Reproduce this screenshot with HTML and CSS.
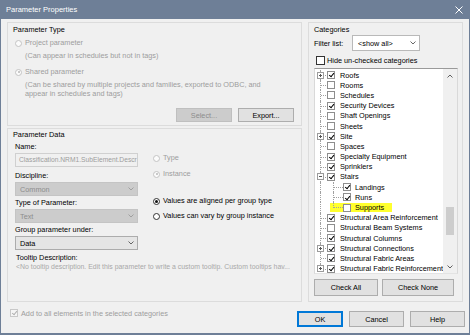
FILE: index.html
```html
<!DOCTYPE html>
<html>
<head>
<meta charset="utf-8">
<link rel="stylesheet" href="styles.css">
</head>
<body>
<div class="window">
  <div class="titlebar">
    <span>Parameter Properties</span>
    <svg class="close" width="8" height="8" viewBox="0 0 8 8"><path d="M0.5 0.5L7.5 7.5M7.5 0.5L0.5 7.5" stroke="#fff" stroke-width="1"/></svg>
  </div>
  <div class="content">
    <div class="cols">
      <div class="left">
        <div class="group type-group">
          <div class="gtitle">Parameter Type</div>
          <div class="opt r1 dis"><span class="radio"></span>Project parameter</div>
          <div class="hint h1 dis">(Can appear in schedules but not in tags)</div>
          <div class="opt r2 dis"><span class="radio dot"></span>Shared parameter</div>
          <div class="hint h2 dis">(Can be shared by multiple projects and families, exported to ODBC, and<br>appear in schedules and tags)</div>
          <div class="btnrow">
            <span class="btn disabled w56">Select...</span>
            <span class="btn w56">Export...</span>
          </div>
        </div>
        <div class="group data-group">
          <div class="gtitle t2">Parameter Data</div>
          <div class="dgrid">
            <div class="fields">
              <div class="flabel f-name">Name:</div>
              <div class="input">Classification.NRM1.SubElement.Descr</div>
              <div class="flabel f-gap4">Discipline:</div>
              <div class="combo disabled"><span>Common</span><svg width="6" height="4" viewBox="0 0 6 4"><path d="M0.5 0.5L3 3L5.5 0.5" fill="none" stroke="#9a9a9a" stroke-width="0.9"/></svg></div>
              <div class="flabel">Type of Parameter:</div>
              <div class="combo disabled"><span>Text</span><svg width="6" height="4" viewBox="0 0 6 4"><path d="M0.5 0.5L3 3L5.5 0.5" fill="none" stroke="#9a9a9a" stroke-width="0.9"/></svg></div>
              <div class="flabel">Group parameter under:</div>
              <div class="combo"><span>Data</span><svg width="6" height="4" viewBox="0 0 6 4"><path d="M0.5 0.5L3 3L5.5 0.5" fill="none" stroke="#555" stroke-width="0.9"/></svg></div>
            </div>
            <div class="radios">
              <div class="opt rt dis"><span class="radio"></span>Type</div>
              <div class="opt ri dis"><span class="radio dot"></span>Instance</div>
              <div class="opt ra"><span class="radio on"></span>Values are aligned per group type</div>
              <div class="opt rv"><span class="radio en"></span>Values can vary by group instance</div>
            </div>
          </div>
          <div class="tlabel">Tooltip Description:</div>
          <div class="ttext">&lt;No tooltip description. Edit this parameter to write a custom tooltip. Custom tooltips hav...</div>
        </div>
      </div>
      <div class="group cat-group">
        <div class="gtitle">Categories</div>
        <div class="filter">
          <span class="flbl">Filter list:</span>
          <div class="fcombo"><span>&lt;show all&gt;</span><svg width="6" height="4" viewBox="0 0 6 4"><path d="M0.5 0.5L3 3L5.5 0.5" fill="none" stroke="#555" stroke-width="0.9"/></svg></div>
        </div>
        <div class="hide"><span class="cb"></span>Hide un-checked categories</div>
        <div class="list">
          <div class="tree">
            <div class="node"><span class="g"><i class="exp"></i></span><span class="cb on"></span>Roofs</div>
            <div class="node"><span class="g"></span><span class="cb"></span>Rooms</div>
            <div class="node"><span class="g"></span><span class="cb"></span>Schedules</div>
            <div class="node"><span class="g"></span><span class="cb on"></span>Security Devices</div>
            <div class="node"><span class="g"></span><span class="cb"></span>Shaft Openings</div>
            <div class="node"><span class="g"></span><span class="cb"></span>Sheets</div>
            <div class="node"><span class="g"><i class="exp"></i></span><span class="cb on"></span>Site</div>
            <div class="node"><span class="g"></span><span class="cb"></span>Spaces</div>
            <div class="node"><span class="g"></span><span class="cb on"></span>Specialty Equipment</div>
            <div class="node"><span class="g"></span><span class="cb on"></span>Sprinklers</div>
            <div class="node"><span class="g"><i class="exp minus"></i></span><span class="cb on"></span>Stairs</div>
            <div class="node child"><span class="g"><b class="cl"></b></span><span class="cb on"></span>Landings</div>
            <div class="node child"><span class="g"><b class="cl"></b></span><span class="cb on"></span>Runs</div>
            <div class="node child"><span class="g"><b class="cl last"></b></span><span class="hl"><span class="cb"></span>Supports</span></div>
            <div class="node"><span class="g"></span><span class="cb on"></span>Structural Area Reinforcement</div>
            <div class="node"><span class="g"></span><span class="cb"></span>Structural Beam Systems</div>
            <div class="node"><span class="g"></span><span class="cb on"></span>Structural Columns</div>
            <div class="node"><span class="g"><i class="exp"></i></span><span class="cb on"></span>Structural Connections</div>
            <div class="node"><span class="g"></span><span class="cb on"></span>Structural Fabric Areas</div>
            <div class="node"><span class="g"><i class="exp"></i></span><span class="cb on"></span>Structural Fabric Reinforcement</div>
          </div>
          <div class="vscroll">
            <svg class="arr" width="6" height="4" viewBox="0 0 6 4"><path d="M0.5 3.5L3 1L5.5 3.5" fill="none" stroke="#606060" stroke-width="1"/></svg>
            <div class="thumb"></div>
            <svg class="arr down" width="6" height="4" viewBox="0 0 6 4"><path d="M0.5 0.5L3 3L5.5 0.5" fill="none" stroke="#606060" stroke-width="1"/></svg>
          </div>
        </div>
        <div class="checkrow">
          <span class="btn w64">Check All</span>
          <span class="btn w72">Check None</span>
        </div>
      </div>
    </div>
    <div class="footer">
      <div class="addall dis"><span class="cb on dimcb"></span>Add to all elements in the selected categories</div>
      <div class="dlgbtns">
        <span class="btn ok">OK</span>
        <span class="btn w55">Cancel</span>
        <span class="btn w55">Help</span>
      </div>
    </div>
  </div>
</div>
</body>
</html>
```

FILE: styles.css
```css
* { box-sizing: border-box; margin: 0; padding: 0; }
html, body { width: 470px; height: 335px; overflow: hidden; }
body {
  font-family: "Liberation Sans", Arial, sans-serif;
  font-size: 7.3px;
  color: #000;
  background: #f0f0f0;
}
.window {
  width: 470px;
  height: 335px;
  border: 1px solid #6e7f97;
  border-top: 0;
  border-bottom-width: 2px;
  background: #f0f0f0;
  display: flex;
  flex-direction: column;
}
.titlebar {
  height: 19px;
  flex: none;
  background: #6e7f97;
  color: #fff;
  display: flex;
  align-items: center;
  justify-content: space-between;
  padding: 0 6px 0 5px;
  font-size: 7.5px;
}
.close { display: block; }
.content { padding: 3px 6px 0 6px; flex: 1; display: flex; flex-direction: column; }
.cols { display: flex; gap: 6px; height: 280px; flex: none; }
.left { width: 295px; display: flex; flex-direction: column; gap: 2px; }
.group { border: 1px solid #dcdcdc; }
.type-group { height: 104px; padding-left: 5px; }
.data-group { height: 174px; padding-left: 7px; }
.cat-group { width: 155px; height: 280px; padding-left: 5px; }
.gtitle { line-height: 10px; margin-top: 2px; }
.gtitle.t2 { margin-top: 1px; margin-left: -2px; }
.dis { color: #9d9d9d; }
.opt { display: flex; align-items: center; height: 10px; line-height: 10px; white-space: nowrap; }
.radio {
  width: 7px; height: 7px; border-radius: 50%;
  border: 1px solid #c4c4c4; background: #fbfbfb;
  margin-right: 3px; flex: none; position: relative;
}
.radio.dot::after, .radio.on::after {
  content: ""; position: absolute; left: 1.5px; top: 1.5px;
  width: 2px; height: 2px; border-radius: 50%; background: #b8b8b8;
}
.radio.on { border-color: #333; background: #fff; }
.radio.on::after { background: #111; left: 1px; top: 1px; width: 3px; height: 3px; }
.radio.en { border-color: #333; background: #fff; }
.type-group .radio { margin-left: 2px; }
.r1 { margin-top: 3px; }
.h1 { margin-top: 3px; padding-left: 12px; line-height: 10px; }
.r2 { margin-top: 6px; }
.h2 { margin-top: 4px; padding-left: 12px; line-height: 8.5px; }
.btnrow { display: flex; justify-content: flex-end; gap: 6px; margin-top: 10px; padding-right: 7px; }
.btn {
  display: flex; align-items: center; justify-content: center;
  height: 14px; background: #e1e1e1; border: 1px solid #adadad; color: #000;
}
.btn.disabled { background: #cccccc; border-color: #bfbfbf; color: #8c8c8c; }
.w56 { width: 56px; }
.w64 { width: 64px; }
.w72 { width: 72px; }
.w55 { width: 55px; }

.dgrid { display: grid; grid-template-columns: 123px 1fr; column-gap: 15px; }
.fields { display: flex; flex-direction: column; }
.flabel { line-height: 10px; margin-top: 2px; }
.f-gap4 { margin-top: 4px; }
.input {
  margin-top: 1px; height: 14px; border: 1px solid #d0d0d0; background: #f0f0f0;
  color: #9d9d9d; padding: 0 2px 0 3px; line-height: 12px; white-space: nowrap;
  font-size: 6.7px;
}
.combo {
  margin-top: 1px; height: 14px; border: 1px solid #acacac; background: #e5e5e5;
  display: flex; align-items: center; justify-content: space-between; padding: 0 3px 0 4px;
}
.combo.disabled { background: #cccccc; border-color: #c4c4c4; color: #8c8c8c; }
.radios { display: flex; flex-direction: column; }
.rt { margin-top: 13px; }
.ri { margin-top: 6px; }
.ra { margin-top: 17px; }
.rv { margin-top: 5px; }
.tlabel { line-height: 9px; margin-top: 3px; padding-left: 1px; }
.ttext { line-height: 9px; color: #a8a8a8; padding-left: 1px; white-space: nowrap; font-size: 6.9px; }

.filter { display: flex; align-items: center; height: 16px; }
.flbl { width: 38px; }
.fcombo {
  width: 68px; height: 16px; border: 1px solid #b9b9b9; background: #fff;
  display: flex; align-items: center; justify-content: space-between; padding: 0 3px 0 5px;
}
.hide { display: flex; align-items: center; height: 10px; margin-top: 4px; padding-left: 2px; }
.hide .cb { margin-right: 2px; border-color: #333; width: 9px; height: 9px; }
.cb {
  width: 8px; height: 8px; border: 1px solid #8e8e8e; background: #fff; flex: none;
  position: relative; margin-right: 5px;
}
.cb.on::after {
  content: ""; position: absolute; left: 1.6px; top: 0.3px; width: 2.2px; height: 4.2px;
  border: solid #000; border-width: 0 1.3px 1.3px 0; transform: rotate(40deg);
}
.list {
  margin-top: 3px; width: 144px; height: 206px; background: #fff;
  border: 1px solid; border-color: #9a9a9a #d9d9d9 #e3e3e3 #d9d9d9;
  display: flex;
}
.tree { flex: 1; padding-top: 1px; overflow: hidden; }
.node { display: flex; align-items: center; height: 10.2px; white-space: nowrap; }
.g { width: 12px; height: 100%; position: relative; flex: none; }
.g::before {
  content: ""; position: absolute; left: 5px; top: 0; bottom: 0;
  border-left: 1px dotted #a0a0a0;
}
.g::after {
  content: ""; position: absolute; left: 6px; width: 5px; top: 5px;
  border-top: 1px dotted #a0a0a0;
}
.child .g { width: 28px; }
.child .g::after { display: none; }
.cl { position: absolute; left: 18px; top: 0; bottom: 0; border-left: 1px dotted #a0a0a0; }
.cl.last { bottom: 5px; }
.cl::after { content: ""; position: absolute; left: 0; width: 9px; top: 5px; border-top: 1px dotted #a0a0a0; }
.exp {
  position: absolute; left: 2px; top: 1.6px; width: 7px; height: 7px; z-index: 1;
  border: 1px solid #9c9c9c; background: #fff;
}
.exp::before { content: ""; position: absolute; left: 1px; right: 1px; top: 2px; border-top: 1px solid #555; }
.exp::after { content: ""; position: absolute; top: 1px; bottom: 1px; left: 2px; border-left: 1px solid #555; }
.exp.minus::after { display: none; }
.node.child .cb { margin-right: 4px; }
.hl { display: flex; align-items: center; background: #ffff2e; height: 9px; margin-left: -13px; padding-left: 13px; padding-right: 8px; }
.vscroll {
  width: 14px; background: #f0f0f0; flex: none; display: flex; flex-direction: column; align-items: center;
}
.arr { display: block; margin-top: 5px; }
.arr.down { margin-top: auto; margin-bottom: 4px; }
.thumb { width: 8px; height: 28px; background: #cdcdcd; margin-top: 129px; }
.checkrow { display: flex; gap: 4px; margin-top: 5px; }
.checkrow .btn { height: 17px; }

.footer { display: flex; align-items: flex-start; margin-right: -2px; }
.addall { display: flex; align-items: center; height: 10px; margin-top: 6px; padding-left: 3px; }
.dimcb { border-color: #c8c8c8; background: #f5f5f5; margin-right: 3px; }
.dimcb.on::after { border-color: #b0b0b0; }
.dlgbtns { display: flex; gap: 6px; margin-left: auto; margin-top: 9px; }
.dlgbtns .btn { height: 16px; }
.btn.ok { width: 46px; border: 2px solid #0078d7; }
```
